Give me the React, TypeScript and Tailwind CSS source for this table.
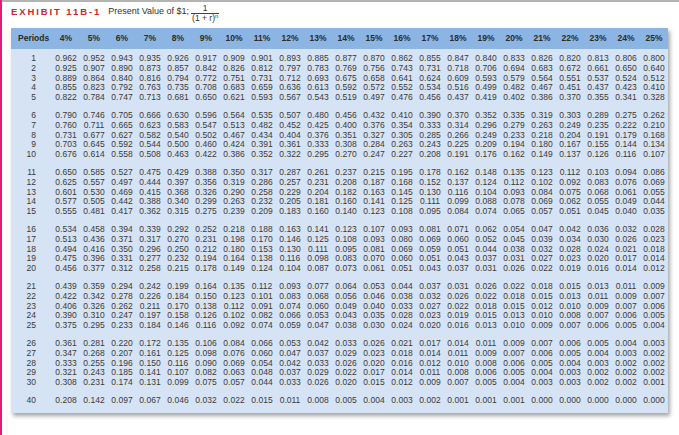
const rates = [4, 5, 6, 7, 8, 9, 10, 11, 12, 13, 14, 15, 16, 17, 18, 19, 20, 21, 22, 23, 24, 25];

const groups = [
  [1, 2, 3, 4, 5],
  [6, 7, 8, 9, 10],
  [11, 12, 13, 14, 15],
  [16, 17, 18, 19, 20],
  [21, 22, 23, 24, 25],
  [26, 27, 28, 29, 30],
  [40],
];

// present value of $1 at rate r for n periods
function pv(rate: number, n: number) {
  return (1 / Math.pow(1 + rate / 100, n)).toFixed(3);
}

function Row({ n }: { n: number }) {
  return (
    <div className="grid grid-cols-[41px_repeat(22,28px)] h-[9.8px] leading-[9.8px]">
      <div className="text-right pr-[16px]">{n}</div>
      {rates.map((r) => (
        <div key={r} className="text-center">
          {pv(r, n)}
        </div>
      ))}
    </div>
  );
}

export default function App() {
  return (
    <div className="w-[679px] h-[435px] bg-white border-l-2 border-[#e6197c] overflow-hidden font-['Liberation_Sans',Arial,sans-serif]">
      <div className="h-[1.5px] bg-[#b3b3b3]" />

      {/* Title */}
      <div className="flex h-[26.5px] pl-[9px]">
        <span className="mt-[4px] text-[9.5px] leading-[11px] font-bold text-[#d2232c] tracking-[1.9px]">
          EXHIBIT 11B-1
        </span>
        <span className="ml-[7px] mt-[4px] text-[9px] leading-[11px] text-[#333]">
          Present Value of $1;
        </span>
        <span className="ml-[2px] mt-[2.5px] flex flex-col items-center text-[8.5px] leading-[9px] text-[#333]">
          <span>1</span>
          <span className="border-t border-[#444] px-[1px] leading-[9px]">
            (1 + r)<sup className="text-[6px]">n</sup>
          </span>
        </span>
      </div>

      {/* Table */}
      <div className="ml-[9px] w-[657px] bg-[#d6e3f4] text-[#3a3a3a] text-[8.5px] shadow-[2px_3px_4px_rgba(0,0,0,0.35)]">
        <div className="grid grid-cols-[41px_repeat(22,28px)] h-[21px] items-center bg-[#8db5e3] font-bold text-[#2b2b2b]">
          <div className="pl-[7px]">Periods</div>
          {rates.map((r) => (
            <div key={r} className="text-center">
              {r}%
            </div>
          ))}
        </div>
        <div className="flex flex-col gap-[8px] pt-[5px] pb-[7px]">
          {groups.map((g) => (
            <div key={g[0]}>
              {g.map((n) => (
                <Row key={n} n={n} />
              ))}
            </div>
          ))}
        </div>
      </div>
    </div>
  );
}
